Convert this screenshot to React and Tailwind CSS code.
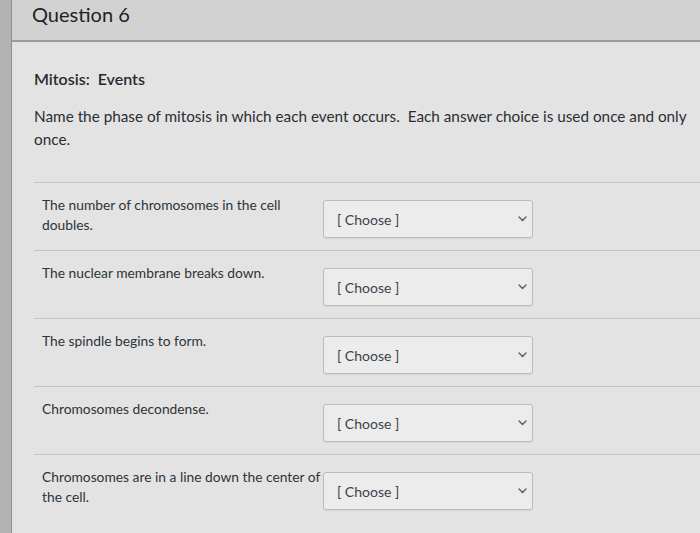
import React from 'react';

const events = [
  { text: 'The number of chromosomes in the cell doubles.' },
  { text: 'The nuclear membrane breaks down.' },
  { text: 'The spindle begins to form.' },
  { text: 'Chromosomes decondense.' },
  { text: 'Chromosomes are in a line down the center of the cell.' },
];

const Chevron = () => (
  <svg width="9" height="6" viewBox="0 0 9 6" fill="none" className="text-[#5a5a5a]">
    <path d="M1 1l3.5 3.5L8 1" stroke="currentColor" strokeWidth="1.4" strokeLinecap="round" strokeLinejoin="round" />
  </svg>
);

const ChooseSelect = () => (
  <div className="mt-[5px] flex h-[38px] w-[210px] shrink-0 items-center justify-between rounded-[3px] border border-[#bcbcbc] bg-[#ececec] pl-[13px] pr-[5px] shadow-[0_1px_1px_rgba(0,0,0,0.06)]">
    <span className="text-[14px] text-[#3d4248]">[ Choose ]</span>
    <Chevron />
  </div>
);

const App = () => {
  return (
    <div className="flex h-[533px] w-[700px] overflow-hidden bg-[#e3e3e3]" style={{ fontFamily: 'Lato, "Open Sans", sans-serif' }}>
      <div className="w-[12px] shrink-0 bg-[#b3b3b3] border-r border-[#8e8e8e]" />
      <div className="flex min-w-0 flex-1 flex-col">
        {/* header */}
        <div className="h-[42px] shrink-0 border-b-2 border-[#9c9c9c] bg-[#d2d2d3] pl-[20px]">
          <h2 className="text-[20px] leading-[28px] text-[#1f1f1f]">Question 6</h2>
        </div>

        {/* body */}
        <div className="flex flex-col pl-[22px] pt-[25px]">
          <h3 className="text-[16px] font-semibold leading-[24px] text-[#262a2e]">Mitosis:&nbsp; Events</h3>
          <p className="mt-[14px] w-[666px] text-[15.3px] leading-[23px] text-[#2a2e33]">
            Name the phase of mitosis in which each event occurs.&nbsp; Each answer choice is used once and only once.
          </p>

          <div className="mt-[31px]">
            {events.map((ev, i) => (
              <div key={i} className="flex h-[68px] items-start border-t border-[#c4c4c4] pl-[8px] pt-[12px]">
                <div className="w-[281px] shrink-0 text-[13.8px] leading-[20px] text-[#2e3338]">{ev.text}</div>
                <ChooseSelect />
              </div>
            ))}
          </div>
        </div>
      </div>
    </div>
  );
};

export default App;
